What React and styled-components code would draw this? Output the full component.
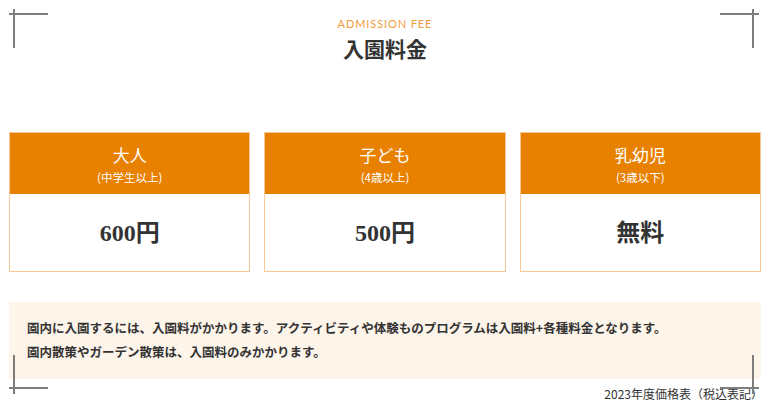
import React from 'react'
import styled, { createGlobalStyle } from 'styled-components'

const GlobalStyle = createGlobalStyle`
  html, body {
    margin: 0;
    padding: 0;
    background: #fff;
  }
  body {
    font-family: "Noto Sans CJK JP", "Noto Sans", sans-serif;
    color: #333;
  }
`

const prices = [
  { id: 1, name: '大人', note: '(中学生以上)', price: '600円' },
  { id: 2, name: '子ども', note: '(4歳以上)', price: '500円' },
  { id: 3, name: '乳幼児', note: '(3歳以下)', price: '無料' },
]

const Frame = styled.section`
  position: relative;
  width: 768px;
  height: 403px;
  padding: 17px 5px 0 9px;
  box-sizing: border-box;
  overflow: hidden;
`

const Corner = styled.span`
  position: absolute;
  width: 39px;
  height: 39px;
  ${(p) => (p.$top ? 'top: 9px;' : 'top: 355px;')}
  ${(p) => (p.$left ? 'left: 9px;' : 'left: 720px;')}
  &::before,
  &::after {
    content: '';
    position: absolute;
    background: #7d7d7d;
  }
  &::before {
    left: 0;
    right: 0;
    height: 2px;
    ${(p) => (p.$top ? 'top: 4px;' : 'bottom: 5px;')}
  }
  &::after {
    top: 0;
    bottom: 0;
    width: 2px;
    ${(p) => (p.$left ? 'left: 4px;' : 'right: 5px;')}
  }
`

const Title = styled.div`
  text-align: center;
  padding-right: 2px;
  span {
    display: block;
    font-family: Lato, "Open Sans", sans-serif;
    font-size: 11px;
    line-height: 14px;
    letter-spacing: 0.9px;
    color: #f09a3e;
  }
  h2 {
    margin: 3px 0 0;
    font-size: 21px;
    line-height: 28px;
    font-weight: 700;
    color: #333;
  }
`

const Cards = styled.div`
  display: grid;
  grid-template-columns: repeat(3, 1fr);
  gap: 14px;
  margin-top: 70px;
  margin-right: 2px;
`

const Card = styled.div`
  border: 1px solid #f8c994;
  display: flex;
  flex-direction: column;
`

const CardHead = styled.div`
  background: #e88000;
  height: 61px;
  color: #fff;
  text-align: center;
  padding-top: 11px;
  box-sizing: border-box;
  h3 {
    margin: 0;
    font-size: 17px;
    line-height: 22px;
    font-weight: 400;
  }
  p {
    margin: 4px 0 0;
    font-size: 11.5px;
    line-height: 14px;
  }
`

const CardBody = styled.div`
  height: 77px;
  display: flex;
  align-items: center;
  justify-content: center;
  font-family: "Liberation Serif", "Noto Sans CJK JP", serif;
  font-size: 24px;
  font-weight: 700;
  color: #333;
  padding-bottom: 5px;
  box-sizing: border-box;
`

const Notice = styled.div`
  margin-top: 30px;
  margin-right: 2px;
  background: #fdf4ea;
  height: 77px;
  padding: 14px 18px 0;
  box-sizing: border-box;
  p {
    margin: 0;
    font-size: 12.5px;
    line-height: 24px;
    font-weight: 700;
    color: #333;
  }
`

const Footnote = styled.p`
  margin: 7px 0 0;
  text-align: right;
  font-size: 12px;
  line-height: 16px;
  color: #333;
`

const App = () => {
  return (
    <Frame>
      <GlobalStyle />
      <Corner $top $left />
      <Corner $top />
      <Corner $left />
      <Corner />
      <Title>
        <span>ADMISSION FEE</span>
        <h2>入園料金</h2>
      </Title>
      <Cards>
        {prices.map((i) => {
          return (
            <Card key={i.id}>
              <CardHead>
                <h3>{i.name}</h3>
                <p>{i.note}</p>
              </CardHead>
              <CardBody>{i.price}</CardBody>
            </Card>
          )
        })}
      </Cards>
      <Notice>
        <p>園内に入園するには、入園料がかかります。アクティビティや体験ものプログラムは入園料+各種料金となります。</p>
        <p>園内散策やガーデン散策は、入園料のみかかります。</p>
      </Notice>
      <Footnote>2023年度価格表（税込表記）</Footnote>
    </Frame>
  )
}

export default App
